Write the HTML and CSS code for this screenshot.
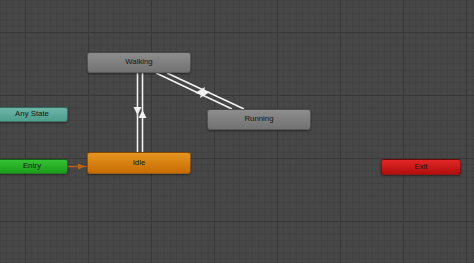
FILE: index.html
```html
<!DOCTYPE html>
<html lang="en">
<head>
  <meta charset="UTF-8">
  <title>Animator</title>
  <link rel="stylesheet" href="styles.css">
</head>
<body>
<div class="graph">
  <svg class="edges" width="474" height="263" viewBox="0 0 474 263">
    <!-- Walking <-> Idle -->
    <line x1="137.5" y1="72" x2="137.5" y2="152" class="edge" />
    <line x1="142.5" y1="72" x2="142.5" y2="152" class="edge" />
    <polygon points="133.5,107 141.5,107 137.5,115" class="head" />
    <polygon points="138.5,118 146.5,118 142.5,110" class="head" />

    <!-- Walking <-> Running -->
    <line x1="156" y1="73" x2="232" y2="109" class="edge" />
    <line x1="167" y1="73" x2="244" y2="109" class="edge" />
    <polygon points="195,93 205,87 203,95" class="head" />
    <polygon points="210,92 200,98 202,90" class="head" />

    <!-- Entry -> Idle -->
    <line x1="68" y1="166.5" x2="87" y2="166.5" class="edge entry-edge" />
    <polygon points="78,163.5 78,169.5 85,166.5" class="head entry-head" />
  </svg>

  <div class="node state walking">Walking</div>
  <div class="node state running">Running</div>
  <div class="node state idle">Idle</div>
  <div class="node any-state">Any State</div>
  <div class="node entry">Entry</div>
  <div class="node exit">Exit</div>
</div>
</body>
</html>
```

FILE: styles.css
```css
body {
  margin: 0;
  background: #464646;
  font-family: 'Liberation Sans', Arial, sans-serif;
}

.graph {
  position: relative;
  width: 474px;
  height: 263px;
  overflow: hidden;
  background-color: #474747;
  background-image:
    linear-gradient(90deg, #383838 1px, transparent 1px),
    linear-gradient(#383838 1px, transparent 1px),
    linear-gradient(90deg, #414141 1px, transparent 1px),
    linear-gradient(#414141 1px, transparent 1px);
  background-size: 63px 63px, 63px 63px, 6.3px 6.3px, 6.3px 6.3px;
  background-position: 25px 32px;
}

.edges {
  position: absolute;
  left: 0;
  top: 0;
}

.edge {
  stroke: #f2f2f2;
  stroke-width: 1.6;
}

.head {
  fill: #f2f2f2;
}

.entry-edge {
  stroke: #b8631a;
  stroke-width: 1.4;
}

.entry-head {
  fill: #b8631a;
}

.node {
  position: absolute;
  display: flex;
  align-items: center;
  justify-content: center;
  box-sizing: border-box;
  padding-bottom: 2px;
  border-radius: 3px;
  border: 1px solid rgba(0, 0, 0, 0.35);
  box-shadow: 0 1px 2px rgba(0, 0, 0, 0.45);
  font-size: 7.8px;
  color: #141414;
}

.state {
  width: 104px;
  height: 21px;
  background: linear-gradient(#8d8d8d, #727272);
}

.walking {
  left: 87px;
  top: 52px;
}

.running {
  left: 207px;
  top: 109px;
}

.idle {
  left: 87px;
  top: 152px;
  height: 22px;
  background: linear-gradient(#e6951f, #c86c04);
}

.any-state {
  left: -4px;
  top: 107px;
  width: 72px;
  height: 15px;
  background: linear-gradient(#6db6a6, #4e9d8d);
}

.entry {
  left: -4px;
  top: 159px;
  width: 72px;
  height: 15px;
  background: linear-gradient(#34c234, #1c9c1c);
}

.exit {
  left: 381px;
  top: 159px;
  width: 80px;
  height: 16px;
  background: linear-gradient(#e42626, #b10e0e);
}
```
